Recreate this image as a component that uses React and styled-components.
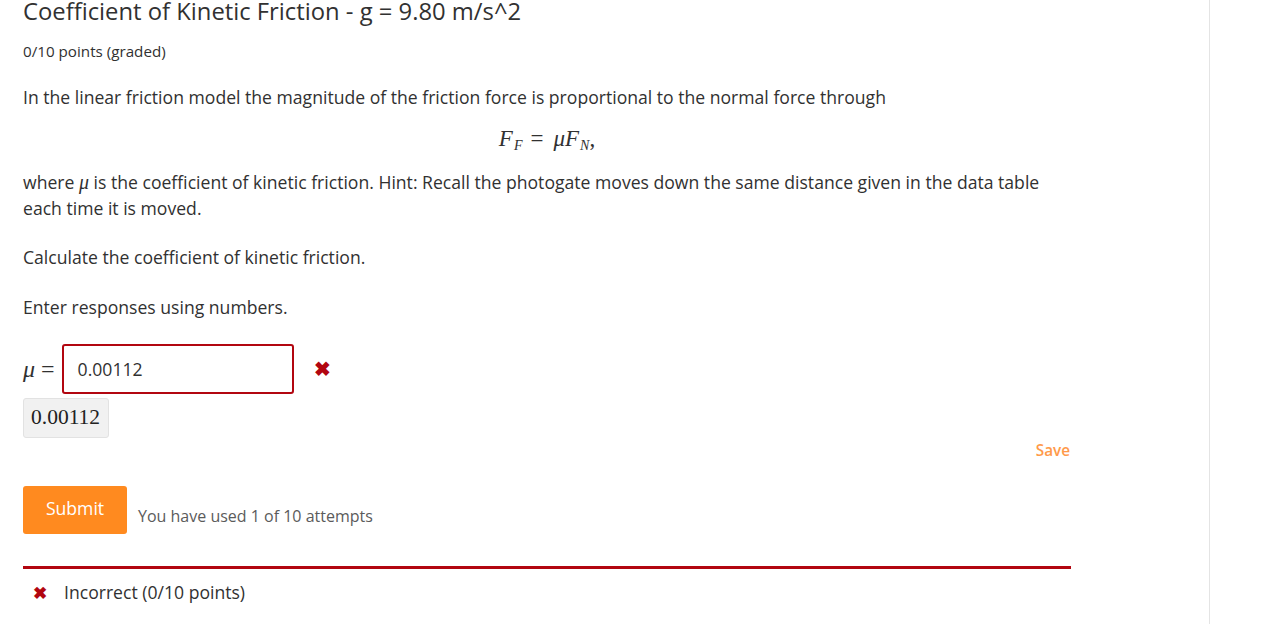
import React from 'react';
import styled, { createGlobalStyle } from 'styled-components';

const GlobalStyle = createGlobalStyle`
  html, body {
    margin: 0;
    padding: 0;
    background: #fff;
    font-family: "Open Sans", "Liberation Sans", sans-serif;
    color: #313131;
  }
`;

const Page = styled.div`
  display: flex;
  height: 624px;
  overflow: hidden;
`;

const Main = styled.div`
  width: 1210px;
  border-right: 1px solid #e4e4e4;
  box-sizing: border-box;
  padding: 0 138px 0 23px;
`;

const Title = styled.h2`
  margin: -5px 0 0;
  font-size: 23.8px;
  font-weight: 400;
  line-height: 32px;
  color: #313131;
`;

const Points = styled.div`
  margin-top: 14px;
  font-size: 15.2px;
  line-height: 20px;
  color: #313131;
`;

const Para = styled.p`
  margin: ${(p) => p.$top || 0}px 0 0;
  font-size: 17.6px;
  line-height: 26px;
  color: #313131;
`;

const MathVar = styled.span`
  font-family: "Liberation Serif", "DejaVu Serif", serif;
  font-style: italic;
  font-size: ${(p) => p.$size || 20}px;
`;

const Sub = styled.sub`
  font-size: 14px;
  vertical-align: -4px;
  margin-left: 1px;
`;

const Display = styled.div`
  text-align: center;
  margin: 14px 0 0;
  font-family: "Liberation Serif", "DejaVu Serif", serif;
  font-size: 23px;
  line-height: 30px;
`;

const Eq = styled.span`
  font-style: normal;
  margin: 0 10px 0 8px;
`;

const AnswerRow = styled.div`
  display: flex;
  align-items: center;
  margin-top: 24px;
`;

const Label = styled.span`
  font-family: "Liberation Serif", "DejaVu Serif", serif;
  font-size: 24px;
  margin-right: 7px;
`;

const Input = styled.div`
  width: 232px;
  height: 50px;
  box-sizing: border-box;
  border: 2px solid #b20610;
  border-radius: 3px;
  padding-left: 14px;
  display: flex;
  align-items: center;
  font-size: 17.6px;
  color: #313131;
`;

const Cross = styled.span`
  color: #b20610;
  font-size: ${(p) => p.$size || 20}px;
  font-weight: 700;
  margin-left: ${(p) => p.$left || 0}px;
  line-height: 1;
`;

const Preview = styled.div`
  display: inline-block;
  margin-top: 4px;
  padding: 6px 8px 8px 7px;
  background: #f1f1f1;
  border: 1px solid #e2e2e2;
  border-radius: 3px;
  font-family: "Liberation Serif", "DejaVu Serif", serif;
  font-size: 21.5px;
  line-height: 24px;
  color: #222;
`;

const SaveRow = styled.div`
  display: flex;
  justify-content: flex-end;
  margin-top: 2px;
  padding-right: 1px;
`;

const SaveLink = styled.span`
  color: #ff9a4a;
  font-size: 15.3px;
  font-weight: 600;
`;

const Actions = styled.div`
  display: flex;
  align-items: center;
  margin-top: 26px;
`;

const Submit = styled.button`
  background: #ff8a1f;
  color: #fff;
  border: none;
  border-radius: 3px;
  width: 104px;
  height: 48px;
  font-family: "Open Sans", "Liberation Sans", sans-serif;
  font-size: 17.6px;
  padding: 0 0 4px;
`;

const Attempts = styled.span`
  margin-left: 11px;
  margin-top: 12px;
  font-size: 16px;
  color: #5b5b5b;
`;

const Result = styled.div`
  margin-top: 32px;
  border-top: 3px solid #b20610;
  display: flex;
  align-items: center;
  padding: 11px 0 0 10px;
  font-size: 17.6px;
  color: #313131;
`;

const ResultText = styled.span`
  margin-left: 17px;
`;

export default function App() {
  return (
    <>
      <GlobalStyle />
      <Page>
        <Main>
          <Title>Coefficient of Kinetic Friction - g = 9.80 m/s^2</Title>
          <Points>0/10 points (graded)</Points>
          <Para $top={23}>
            In the linear friction model the magnitude of the friction force is proportional to the normal force through
          </Para>
          <Display>
            <MathVar $size={23}>
              F<Sub>F</Sub>
            </MathVar>
            <Eq>=</Eq>
            <MathVar $size={23}>
              μF<Sub>N</Sub>
            </MathVar>
            ,
          </Display>
          <Para $top={8}>
            where <MathVar>μ</MathVar> is the coefficient of kinetic friction. Hint: Recall the photogate moves down the same distance given in the data table each time it is moved.
          </Para>
          <Para $top={23}>Calculate the coefficient of kinetic friction.</Para>
          <Para $top={24}>Enter responses using numbers.</Para>
          <AnswerRow>
            <Label>
              <MathVar $size={24}>μ</MathVar> =
            </Label>
            <Input>0.00112</Input>
            <Cross $left={20}>✖</Cross>
          </AnswerRow>
          <Preview>0.00112</Preview>
          <SaveRow>
            <SaveLink>Save</SaveLink>
          </SaveRow>
          <Actions>
            <Submit>Submit</Submit>
            <Attempts>You have used 1 of 10 attempts</Attempts>
          </Actions>
          <Result>
            <Cross $size={17}>✖</Cross>
            <ResultText>Incorrect (0/10 points)</ResultText>
          </Result>
        </Main>
      </Page>
    </>
  );
}
